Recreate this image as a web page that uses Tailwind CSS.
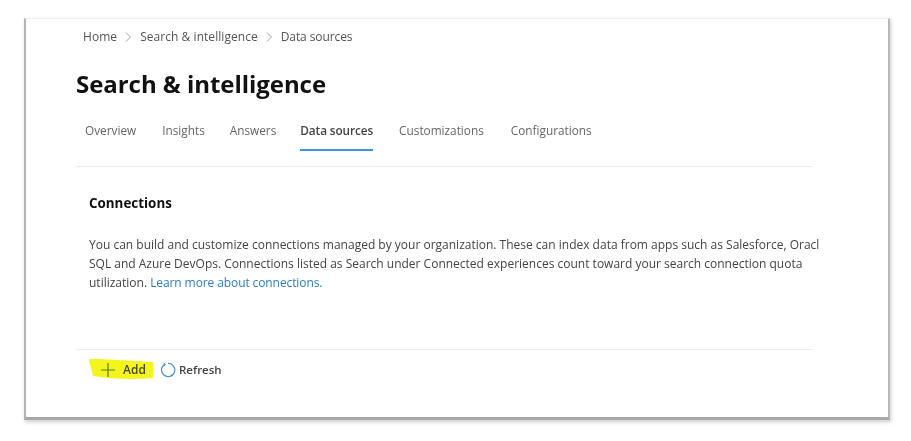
<!DOCTYPE html>
<html lang="en">
<head>
    <meta charset="UTF-8">
    <title>Search &amp; intelligence - Data sources</title>
    <script src="https://cdn.jsdelivr.net/npm/@tailwindcss/browser@4"></script>
</head>
<body class="bg-white h-[441px] w-[911px] overflow-hidden font-['Open_Sans',sans-serif]">
    <div class="ml-[24px] mt-[18px] w-[866px] h-[402px] bg-white overflow-hidden pl-[50px] border-l-2 border-l-[#b4b4b4] border-r-2 border-r-[#b8b8b8] border-b-[3px] border-b-[#a8a8a8] border-t border-t-[#efefef] shadow-[1px_2px_4px_rgba(0,0,0,0.2)] blur-[0.5px]">
        <!-- breadcrumb -->
        <nav class="flex items-center h-[35px] pl-[7px] text-[12px] tracking-[0.05px] text-[#555]">
            <span>Home</span>
            <svg class="w-[7px] h-[10px] mx-[8px]" viewBox="0 0 7 10" fill="none" stroke="#999" stroke-width="0.9"><path d="M1 0.5 L5.5 5 L1 9.5"/></svg>
            <span>Search &amp; intelligence</span>
            <svg class="w-[7px] h-[10px] mx-[8px]" viewBox="0 0 7 10" fill="none" stroke="#999" stroke-width="0.9"><path d="M1 0.5 L5.5 5 L1 9.5"/></svg>
            <span class="-tracking-[0.1px]">Data sources</span>
        </nav>

        <h1 class="mt-[14px] text-[24px] leading-[32px] font-bold text-[#111] -tracking-[0.05px]">Search &amp; intelligence</h1>

        <!-- tabs -->
        <div class="w-[737px] h-[51px] mt-[16px] flex pl-[9px] gap-[25px] text-[11.8px] text-[#666] border-b border-b-[#eee]">
            <a class="pt-[6px]">Overview</a>
            <a class="pt-[6px] ml-[1px]">Insights</a>
            <a class="pt-[6px]">Answers</a>
            <a class="pt-[6px] -ml-[1px] h-[35px] font-semibold text-[#444] border-b-2 border-b-[#3a96dd] -tracking-[0.1px]">Data sources</a>
            <a class="pt-[6px] ml-[1px]">Customizations</a>
            <a class="pt-[6px] ml-[2px]">Configurations</a>
        </div>

        <div class="pl-[13px]">
            <h2 class="mt-[27px] text-[13.4px] leading-[18px] font-bold text-[#111]">Connections</h2>
            <p class="mt-[23px] w-[760px] text-[12px] leading-[19px] text-[#444] whitespace-nowrap">
                You can build and customize connections managed by your organization. These can index data from apps such as Salesforce, Oracl<br>
                SQL and Azure DevOps. Connections listed as Search under Connected experiences count toward your search connection quota<br>
                utilization. <a class="text-[#2b7cc4] -tracking-[0.1px]">Learn more about connections.</a>
            </p>
        </div>

        <!-- command bar -->
        <div class="relative w-[737px] mt-[57px] border-t border-t-[#eee] pl-[13px] flex items-center h-[40px] text-[12px] font-semibold text-[#444]">
            <!-- marker highlight -->
            <svg class="absolute left-[12px] top-[8px] w-[66px] h-[24px]" viewBox="0 0 66 24"><path d="M1 1 C20 1 45 3 65 4 L65 20 C45 22 25 21 5 18 C4 11 1 6 1 1Z" fill="#f5f51e"/></svg>
            <div class="relative flex items-center h-[27px] w-[64px] text-[#4a4a10]">
                <svg class="w-[16px] h-[16px] ml-[11px] mr-[7px]" viewBox="0 0 16 16" fill="none" stroke="#5a7a20" stroke-width="1.2"><path d="M8 1V15M1 8H15"/></svg>
                <span>Add</span>
            </div>
            <svg class="w-[16px] h-[16px] ml-[7px] mr-[3px]" viewBox="0 0 16 16" fill="none" stroke="#4a90d9" stroke-width="1.2"><path d="M5 2.2A6.6 6.6 0 1 0 8 1.4"/><path d="M3.5 0.8L5.4 2.4L4 4.2" stroke-width="1"/></svg>
            <span class="text-[11.5px]">Refresh</span>
        </div>
    </div>
</body>
</html>
